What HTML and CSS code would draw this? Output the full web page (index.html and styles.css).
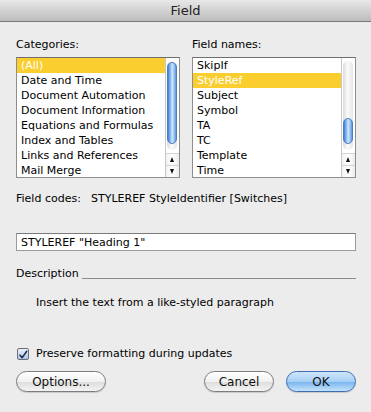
FILE: index.html
```html
<!DOCTYPE html>
<html lang="en">
<head>
  <meta charset="UTF-8">
  <title>Field</title>
  <link rel="stylesheet" href="styles.css">
</head>
<body>

  <div class="window">
    <div class="titlebar">Field</div>

    <div class="content">
      <!-- two list boxes -->
      <div class="columns">
        <div class="column">
          <div class="label">Categories:</div>
          <div class="listbox">
            <ul class="items">
              <li class="selected">(All)</li>
              <li>Date and Time</li>
              <li>Document Automation</li>
              <li>Document Information</li>
              <li>Equations and Formulas</li>
              <li>Index and Tables</li>
              <li>Links and References</li>
              <li>Mail Merge</li>
            </ul>
            <div class="scrollbar">
              <div class="track">
                <div class="thumb thumb-top"></div>
              </div>
              <div class="arrow up"></div>
              <div class="arrow down"></div>
            </div>
          </div>
        </div>

        <div class="column">
          <div class="label">Field names:</div>
          <div class="listbox">
            <ul class="items">
              <li>SkipIf</li>
              <li class="selected">StyleRef</li>
              <li>Subject</li>
              <li>Symbol</li>
              <li>TA</li>
              <li>TC</li>
              <li>Template</li>
              <li>Time</li>
            </ul>
            <div class="scrollbar">
              <div class="track">
                <div class="thumb thumb-bottom"></div>
              </div>
              <div class="arrow up"></div>
              <div class="arrow down"></div>
            </div>
          </div>
        </div>
      </div>

      <div class="codes">
        <span class="codes-label">Field codes:</span>
        <span>STYLEREF StyleIdentifier [Switches]</span>
      </div>

      <input class="code-input" type="text" value='STYLEREF "Heading 1"'>

      <div class="group-title">
        <span>Description</span>
        <div class="rule"></div>
      </div>

      <div class="description">Insert the text from a like-styled paragraph</div>

      <label class="check">
        <span class="box">
          <svg width="12" height="12" viewBox="0 0 12 12">
            <path d="M2.5 6.2 L5 9.2 L10.5 1.5" fill="none" stroke="#1b2c48" stroke-width="1.8" stroke-linecap="round" stroke-linejoin="round"/>
          </svg>
        </span>
        Preserve formatting during updates
      </label>

      <div class="buttons">
        <button class="btn">Options...</button>
        <div class="spacer"></div>
        <button class="btn">Cancel</button>
        <button class="btn default">OK</button>
      </div>
    </div>
  </div>

</body>
</html>
```

FILE: styles.css
```css
* {
  box-sizing: border-box;
}

body {
  margin: 0;
  padding: 0;
  background: #ececec;
  font-family: 'DejaVu Sans', sans-serif;
  font-size: 11px;
  color: #000;
}

.window {
  width: 371px;
  height: 412px;
  background: #ececec;
}

.titlebar {
  height: 22px;
  line-height: 21px;
  text-align: center;
  font-size: 13px;
  color: #222;
  background: linear-gradient(#e8e8e8, #bcbcbc);
  border-bottom: 1px solid #7a7a7a;
}

.content {
  padding: 15px 15px 0 16px;
}

.columns {
  display: flex;
  gap: 12px;
}

.column {
  width: 164px;
}

.label {
  height: 15px;
  line-height: 15px;
  margin-bottom: 5px;
}

.listbox {
  display: flex;
  height: 121px;
  border: 1px solid #8e8e8e;
  border-top-color: #6e6e6e;
  background: #fff;
}

.items {
  flex: 1;
  list-style: none;
  margin: 0;
  padding: 0;
}

.items li {
  height: 15px;
  line-height: 15px;
  padding-left: 4px;
  white-space: nowrap;
  overflow: hidden;
}

.items li.selected {
  background: #fbce2f;
  color: #fff;
}

.scrollbar {
  width: 14px;
  display: flex;
  flex-direction: column;
  border-left: 1px solid #c8c8c8;
  background: #fff;
}

.track {
  flex: 1;
  position: relative;
  margin: 3px 2px 3px 1px;
  border-radius: 6px;
  background: linear-gradient(to right, #dcdcdc, #fafafa 45%, #e6e6e6);
}

.thumb {
  position: absolute;
  left: 0;
  right: 0;
  border-radius: 6px;
  background: linear-gradient(to right, #3f7fd6, #a8cff5 40%, #cfe6fb 55%, #5d98e0);
  border: 1px solid #4c7ec4;
}

.thumb-top {
  top: 1px;
  height: 82px;
}

.thumb-bottom {
  top: 57px;
  height: 26px;
}

.arrow {
  height: 12px;
  position: relative;
  border-top: 1px solid #d4d4d4;
  background: linear-gradient(to right, #f2f2f2, #fff 50%, #ececec);
}

.arrow::after {
  content: "";
  position: absolute;
  left: 4px;
  top: 3px;
  border-left: 2.5px solid transparent;
  border-right: 2.5px solid transparent;
}

.arrow.up::after {
  border-bottom: 5px solid #111;
}

.arrow.down::after {
  border-top: 5px solid #111;
}

.codes {
  margin-top: 13px;
  height: 15px;
  line-height: 15px;
  display: flex;
}

.codes-label {
  width: 75px;
}

.code-input {
  display: block;
  margin-top: 27px;
  width: 340px;
  height: 18px;
  padding: 0 4px;
  font-family: 'DejaVu Sans', sans-serif;
  font-size: 11px;
  border: 1px solid #9a9a9a;
  border-top-color: #7a7a7a;
  background: #fff;
  outline: none;
}

.group-title {
  margin-top: 15px;
  display: flex;
  align-items: center;
  gap: 3px;
  height: 15px;
  line-height: 15px;
}

.rule {
  flex: 1;
  height: 1px;
  margin-top: 9px;
  background: #8a8a8a;
}

.description {
  margin-top: 14px;
  padding-left: 20px;
  height: 15px;
  line-height: 15px;
}

.check {
  margin-top: 36px;
  display: flex;
  align-items: center;
  gap: 7px;
  height: 15px;
}

.box {
  width: 12px;
  height: 12px;
  margin-left: 1px;
  border: 1px solid #6f6f6f;
  border-radius: 2px;
  background: linear-gradient(#e9f1fb, #a9c6ec);
  display: flex;
}

.buttons {
  margin-top: 10px;
  display: flex;
  gap: 12px;
}

.spacer {
  flex: 1;
}

.btn {
  height: 21px;
  padding: 0;
  font-family: 'DejaVu Sans', sans-serif;
  font-size: 12px;
  color: #111;
  border: 1px solid #7c7c7c;
  border-radius: 11px;
  background: linear-gradient(#ffffff, #f1f1f1 50%, #dcdcdc 51%, #f4f4f4);
  box-shadow: 0 1px 1px rgba(0,0,0,0.15);
}

.btn:nth-child(1) {
  width: 90px;
}

.btn:nth-child(3) {
  width: 70px;
}

.btn.default {
  width: 70px;
  border-color: #3d6db5;
  background: linear-gradient(#cfe6fb, #a7cff4 50%, #77b2ee 51%, #c4e3fb);
}
```
